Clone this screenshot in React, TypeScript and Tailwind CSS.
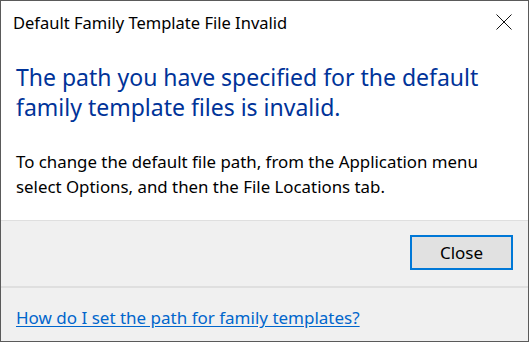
export default function App() {
  const font = { fontFamily: '"Noto Sans", "Segoe UI", sans-serif' };
  return (
    <div
      className="w-[529px] h-[342px] border border-[#5a5a5a] bg-white flex flex-col overflow-hidden"
      style={font}
    >
      <div className="bg-white flex flex-col h-[219px]">
        <div className="flex items-start justify-between pl-[12px] pr-[16px] pt-[11px] h-[49px]">
          <span className="text-[16.5px] leading-[22px] text-black">Default Family Template File Invalid</span>
          <svg width="16" height="16" viewBox="0 0 16 16" className="mt-[2px]">
            <path d="M0.5 0.5 L15.5 15.5 M15.5 0.5 L0.5 15.5" stroke="#111" strokeWidth="1" fill="none" />
          </svg>
        </div>
        <div className="pl-[15px] pr-[10px] mt-[12px] text-[23px] leading-[30px] text-[#003399] whitespace-nowrap">
          The path you have specified for the default
          <br />
          family template files is invalid.
        </div>
        <div className="pl-[15px] pr-[10px] mt-[27px] text-[16.85px] leading-[25px] text-black whitespace-nowrap">
          To change the default file path, from the Application menu
          <br />
          select Options, and then the File Locations tab.
        </div>
      </div>
      <div className="bg-[#f0f0f0] border-t border-[#dfdfdf] h-[66px] flex justify-end pt-[14px] pr-[15px]">
        <button className="w-[103px] h-[35px] bg-[#e1e1e1] border-2 border-[#0078d7] text-[17px] leading-[20px] text-black">
          Close
        </button>
      </div>
      <div className="bg-[#f0f0f0] border-t-2 border-[#dfdfdf] flex-1 pl-[15px] pt-[18px]">
        <span className="text-[17px] leading-[20px] text-[#0066cc] underline underline-offset-[2px] whitespace-nowrap">
          How do I set the path for family templates?
        </span>
      </div>
    </div>
  );
}
